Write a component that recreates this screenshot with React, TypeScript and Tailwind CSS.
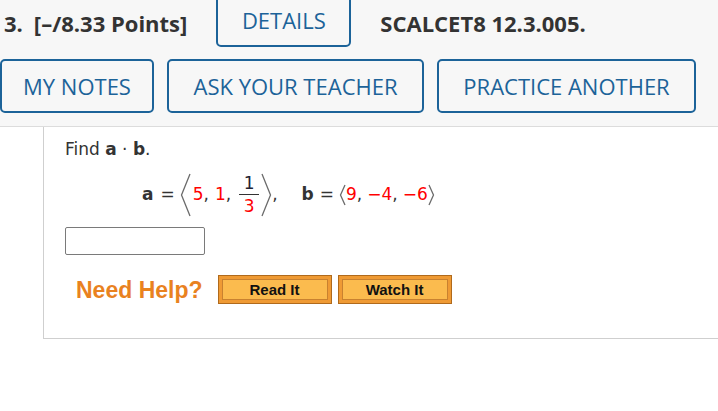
import React from "react"

const blueBtn =
  "flex h-[54px] items-center justify-center rounded-[5px] border-2 border-[#1c6399] bg-[#f7f7f7] text-[22px] text-[#1c6399]"

function Angle({ dir, h, w }: { dir: "l" | "r"; h: number; w: number }) {
  const d = dir === "l" ? `M${w - 1} 1 L1.5 ${h / 2} L${w - 1} ${h - 1}` : `M1 1 L${w - 1.5} ${h / 2} L1 ${h - 1}`
  return (
    <svg width={w} height={h} viewBox={`0 0 ${w} ${h}`} className="shrink-0">
      <path d={d} fill="none" stroke="#6b6b6b" strokeWidth="1.3" />
    </svg>
  )
}

function HelpButton({ label }: { label: string }) {
  return (
    <div className="h-[29px] w-[114px] border border-[#b06a1c] bg-[#ef9a34] p-[3px]">
      <div className="flex h-full items-center justify-center border border-[#c9812f] bg-[#fbbb4e] text-[15px] font-bold text-[#111] [font-family:'Liberation_Sans',Arial,sans-serif]">
        {label}
      </div>
    </div>
  )
}

export default function App() {
  return (
    <div className="h-[411px] w-[718px] overflow-hidden bg-white">
      <div className="border-b border-[#dcdcdc] bg-[#f7f7f7] pb-[13px] [font-family:'Open_Sans',sans-serif]">
        <div className="flex h-[47px] items-center pl-[4px] text-[22px] font-bold text-[#333]">
          <span>3.</span>
          <span className="ml-[11px]">[–/8.33 Points]</span>
          <div className="-mt-[7px] ml-[29px] flex h-[54px] w-[135px] items-center justify-center rounded-[5px] border-2 border-[#1c6399] text-[22px] font-normal text-[#1c6399]">
            DETAILS
          </div>
          <span className="ml-[29px]">SCALCET8 12.3.005.</span>
        </div>
        <div className="mt-[12px] flex gap-[13px]">
          <div className={`${blueBtn} w-[154px]`}>MY NOTES</div>
          <div className={`${blueBtn} w-[257px]`}>ASK YOUR TEACHER</div>
          <div className={`${blueBtn} w-[259px]`}>PRACTICE ANOTHER</div>
        </div>
      </div>

      <div className="ml-[43px] h-[212px] border-b border-l border-[#cfcfcf] pl-[21px] pt-[10px] text-[17px] text-[#333] [font-family:'DejaVu_Sans',Verdana,sans-serif]">
        <div>
          Find <b>a</b> · <b>b</b>.
        </div>
        <div className="mt-[10px] flex items-center pl-[77px]">
          <b>a</b>
          <span className="ml-[7px]">=</span>
          <span className="ml-[5px]">
            <Angle dir="l" h={44} w={11} />
          </span>
          <span className="ml-[2px] text-[#ff0000]">5</span>
          <span>,</span>
          <span className="ml-[6px] text-[#ff0000]">1</span>
          <span>,</span>
          <span className="ml-[8px] inline-flex flex-col items-center">
            <span className="px-[2px] leading-[21px] text-[#223]">1</span>
            <span className="h-px w-[20px] bg-[#333]" />
            <span className="leading-[22px] text-[#ff0000]">3</span>
          </span>
          <span className="ml-[2px]">
            <Angle dir="r" h={44} w={11} />
          </span>
          <span>,</span>
          <b className="ml-[24px]">b</b>
          <span className="ml-[6px]">=</span>
          <span className="ml-[5px]">
            <Angle dir="l" h={22} w={7} />
          </span>
          <span className="text-[#ff0000]">9</span>
          <span>,</span>
          <span className="ml-[5px] text-[#ff0000]">−4</span>
          <span>,</span>
          <span className="ml-[5px] text-[#ff0000]">−6</span>
          <span>
            <Angle dir="r" h={22} w={7} />
          </span>
        </div>
        <div className="mt-[10px] h-[28px] w-[140px] rounded-[2px] border border-[#7a7a7a] bg-white" />
        <div className="mt-[18px] flex items-center">
          <span className="ml-[11px] text-[23px] font-bold text-[#e9821f] [font-family:'Liberation_Sans',Arial,sans-serif]">
            Need Help?
          </span>
          <div className="ml-[15px] flex gap-[6px]">
            <HelpButton label="Read It" />
            <HelpButton label="Watch It" />
          </div>
        </div>
      </div>
    </div>
  )
}
